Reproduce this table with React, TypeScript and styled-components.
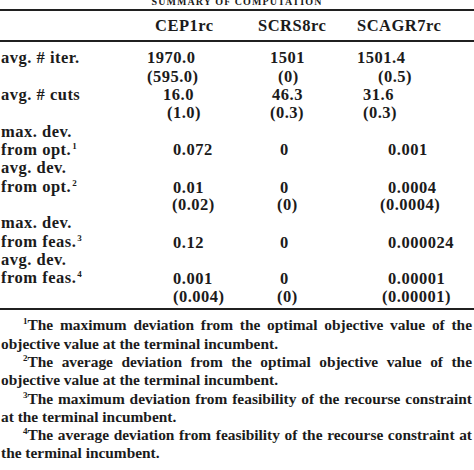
import React from 'react'
import styled, { createGlobalStyle } from 'styled-components'

const Global = createGlobalStyle`
  html, body {
    margin: 0;
    padding: 0;
    background: #ffffff;
  }
  body {
    width: 474px;
    height: 470px;
    overflow: hidden;
    color: #1b1b1b;
    font-family: "Liberation Serif", "Times New Roman", serif;
    font-weight: 700;
  }
`

const Page = styled.div`
  width: 474px;
  display: flex;
  flex-direction: column;
`

const Title = styled.div`
  height: 12px;
  margin-top: -4px;
  text-align: center;
  font-size: 10px;
  line-height: 12px;
  letter-spacing: 1.1px;
  text-transform: uppercase;
`

const Rule = styled.div<{ $weight: number; $gap: number }>`
  height: ${({ $weight }) => $weight}px;
  background: #202020;
  margin-top: ${({ $gap }) => $gap}px;
`

const Grid = styled.div`
  display: grid;
  grid-template-columns: 147px 108px 100px 1fr;
  font-size: 16.5px;
  letter-spacing: 0.5px;
`

const Header = styled(Grid)`
  height: 29px;
  align-items: center;
`

const Body = styled(Grid)`
  grid-auto-rows: 18.35px;
  align-items: center;
  padding: 7px 0 3px;
`

const Cell = styled.div<{ $indent?: number; $drop?: boolean }>`
  padding-left: ${({ $indent }) => $indent ?? 0}px;
  padding-top: ${({ $drop }) => ($drop ? 2 : 0)}px;
  white-space: nowrap;
  line-height: 15px;
`

const Label = styled(Cell)`
  padding-left: 1px;
`

const Sup = styled.sup`
  font-size: 9px;
  line-height: 0;
  vertical-align: 6px;
  margin-left: 1px;
  letter-spacing: 0;
`

const Notes = styled.div`
  padding-top: 6px;
  font-size: 15.4px;
`

const NoteLine = styled.div<{ $full?: boolean; $first?: boolean }>`
  height: 18.3px;
  line-height: 18.3px;
  white-space: nowrap;
  text-align: ${({ $full }) => ($full ? 'justify' : 'left')};
  text-align-last: ${({ $full }) => ($full ? 'justify' : 'left')};
  padding-left: ${({ $first }) => ($first ? 22 : 1)}px;
  padding-right: ${({ $full }) => ($full ? 2 : 0)}px;
`

type Line = {
  label?: string
  sup?: string
  values?: [string, string, string]
  indents?: [number, number, number]
  drop?: boolean
}

const lines: Line[] = [
  { label: 'avg. # iter.', values: ['1970.0', '1501', '1501.4'], indents: [0, 15, 2] },
  { values: ['(595.0)', '(0)', '(0.5)'], indents: [0, 23, 23] },
  { label: 'avg. # cuts', values: ['16.0', '46.3', '31.6'], indents: [16, 17, 8] },
  { values: ['(1.0)', '(0.3)', '(0.3)'], indents: [20, 15, 8] },
  { label: 'max. dev.' },
  { label: 'from opt.', sup: '1', values: ['0.072', '0', '0.001'], indents: [26, 25, 33] },
  { label: 'avg. dev.' },
  { label: 'from opt.', sup: '2', values: ['0.01', '0', '0.0004'], indents: [26, 25, 33], drop: true },
  { values: ['(0.02)', '(0)', '(0.0004)'], indents: [25, 22, 25] },
  { label: 'max. dev.' },
  { label: 'from feas.', sup: '3', values: ['0.12', '0', '0.000024'], indents: [26, 25, 33], drop: true },
  { label: 'avg. dev.' },
  { label: 'from feas.', sup: '4', values: ['0.001', '0', '0.00001'], indents: [26, 25, 33], drop: true },
  { values: ['(0.004)', '(0)', '(0.00001)'], indents: [26, 22, 27] },
]

const notes: { mark: string; lines: string[] }[] = [
  {
    mark: '1',
    lines: [
      'The maximum deviation from the optimal objective value of the',
      'objective value at the terminal incumbent.',
    ],
  },
  {
    mark: '2',
    lines: [
      'The average deviation from the optimal objective value of the',
      'objective value at the terminal incumbent.',
    ],
  },
  {
    mark: '3',
    lines: [
      'The maximum deviation from feasibility of the recourse constraint',
      'at the terminal incumbent.',
    ],
  },
  {
    mark: '4',
    lines: [
      'The average deviation from feasibility of the recourse constraint at',
      'the terminal incumbent.',
    ],
  },
]

export default function App() {
  return (
    <Page>
      <Global />
      <Title>Summary of Computation</Title>
      <Rule $weight={2} $gap={1} />
      <Header>
        <div />
        <Cell $indent={8}>CEP1rc</Cell>
        <Cell $indent={3}>SCRS8rc</Cell>
        <Cell $indent={2}>SCAGR7rc</Cell>
      </Header>
      <Rule $weight={1.5} $gap={0} />
      <Body>
        {lines.map((line, i) => (
          <React.Fragment key={i}>
            <Label>
              {line.label}
              {line.sup && <Sup>{line.sup}</Sup>}
            </Label>
            {[0, 1, 2].map((c) => (
              <Cell key={c} $indent={line.indents?.[c]} $drop={line.drop}>
                {line.values?.[c]}
              </Cell>
            ))}
          </React.Fragment>
        ))}
      </Body>
      <Rule $weight={2} $gap={0} />
      <Notes>
        {notes.map((note) => (
          <React.Fragment key={note.mark}>
            {note.lines.map((text, i) => (
              <NoteLine key={i} $full={i < note.lines.length - 1} $first={i === 0}>
                {i === 0 && <Sup>{note.mark}</Sup>}
                {text}
              </NoteLine>
            ))}
          </React.Fragment>
        ))}
      </Notes>
    </Page>
  )
}
